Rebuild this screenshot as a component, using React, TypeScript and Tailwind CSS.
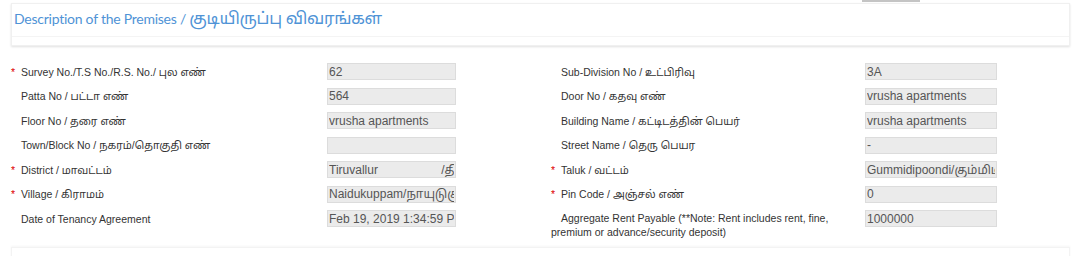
import React from 'react'

type Field = { required?: boolean; label: string; value: string }

const left: Field[] = [
  { required: true, label: 'Survey No./T.S No./R.S. No./ புல எண்', value: '62' },
  { label: 'Patta No / பட்டா எண்', value: '564' },
  { label: 'Floor No / தரை எண்', value: 'vrusha apartments' },
  { label: 'Town/Block No / நகரம்/தொகுதி எண்', value: '' },
  { required: true, label: 'District / மாவட்டம்', value: 'Tiruvallur                   /திருவள்ளூர்' },
  { required: true, label: 'Village / கிராமம்', value: 'Naidukuppam/நாயுடுகுப்பம்' },
  { label: 'Date of Tenancy Agreement', value: 'Feb 19, 2019 1:34:59 PM' },
]

const right: Field[] = [
  { label: 'Sub-Division No / உட்பிரிவு', value: '3A' },
  { label: 'Door No / கதவு எண்', value: 'vrusha apartments' },
  { label: 'Building Name / கட்டிடத்தின் பெயர்', value: 'vrusha apartments' },
  { label: 'Street Name / தெரு பெயர', value: '-' },
  { required: true, label: 'Taluk / வட்டம்', value: 'Gummidipoondi/கும்மிடிப்பூண்டி' },
  { required: true, label: 'Pin Code / அஞ்சல் எண்', value: '0' },
  {
    label: 'Aggregate Rent Payable (**Note: Rent includes rent, fine, premium or advance/security deposit)',
    value: '1000000',
  },
]

function Row({ field, labelW, inputW, tall }: { field: Field; labelW: string; inputW: string; tall?: boolean }) {
  return (
    <div className={`flex ${tall ? 'items-start' : 'items-center h-[17px]'}`}>
      <div className={`${labelW} shrink-0 pr-3 text-[10.5px] leading-[14px] text-[#333] ${tall ? 'pt-[1px]' : ''}`}>
        {field.required ? (
          <span className="inline-block w-[10px] text-[#d00]">*</span>
        ) : (
          <span className="inline-block w-[10px]" />
        )}
        {field.label}
      </div>
      <input
        readOnly
        value={field.value}
        className={`${inputW} h-[17px] shrink-0 bg-[#ebebeb] border border-[#dcdcdc] px-[1px] text-[12px] text-[#555] outline-none font-['Liberation_Sans','Noto_Sans_Tamil',sans-serif]`}
      />
    </div>
  )
}

export default function App() {
  return (
    <div className="w-[1075px] h-[256px] overflow-hidden bg-white font-['Liberation_Sans','Noto_Sans_Tamil','Noto_Sans',sans-serif]">
      <div className="flex h-[3px] pl-[862px]">
        <div className="w-[58px] h-[2px] bg-[#c4c4c4]" />
      </div>

      <div className="ml-[11px] w-[1059px] border border-[#f0f0f0] shadow-[0_1px_2px_rgba(0,0,0,0.12)] bg-white">
        <div className="h-[33px] border-b border-[#f4f4f4] pl-[2px] pt-[2px] flex items-start">
          <span className="font-['Lato','Noto_Sans_Tamil',sans-serif] text-[14px] text-[#4f93d6] tracking-[-0.25px]">
            Description of the Premises / <span className="text-[16.5px]">குடியிருப்பு விவரங்கள்</span>
          </span>
        </div>
        <div className="h-[8px]" />
      </div>

      <div className="mt-[17px] grid grid-cols-[540px_535px]">
        <div className="pl-[11px] flex flex-col gap-[7.5px]">
          {left.map((f, i) => (
            <Row key={i} field={f} labelW="w-[316px]" inputW="w-[129px]" />
          ))}
        </div>
        <div className="pl-[11px] flex flex-col gap-[7.5px]">
          {right.map((f, i) => (
            <Row key={i} field={f} labelW="w-[314px]" inputW="w-[132px]" tall={i === right.length - 1} />
          ))}
        </div>
      </div>

      <div className="mt-[8px] ml-[11px] w-[1059px] h-[20px] border border-[#f3f3f3] shadow-[0_-1px_2px_rgba(0,0,0,0.04)]" />
    </div>
  )
}
